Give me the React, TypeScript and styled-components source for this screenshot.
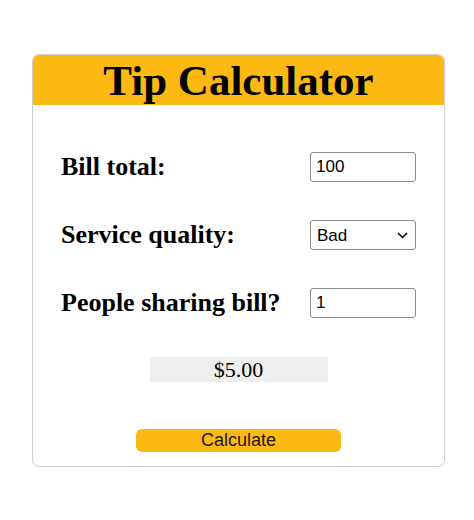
import styled, { createGlobalStyle } from 'styled-components';

const GlobalStyle = createGlobalStyle`
  body {
    margin: 0;
    background: #ffffff;
    font-family: "Liberation Serif", "Times New Roman", serif;
  }
`;

const Page = styled.div`
  padding: 54px 0 0 32px;
`;

const Card = styled.div`
  width: 413px;
  box-sizing: border-box;
  border: 1px solid #cfcfcf;
  border-radius: 7px;
  overflow: hidden;
  padding-bottom: 14px;
`;

const Header = styled.h1`
  margin: 0;
  height: 50px;
  background: #fdb913;
  color: #000;
  font-family: "Liberation Serif", "Times New Roman", serif;
  font-weight: bold;
  font-size: 43px;
  line-height: 52px;
  text-align: center;
`;

const Fields = styled.div`
  display: flex;
  flex-direction: column;
  gap: 38px;
  padding: 47px 28px 0;
`;

const Row = styled.div`
  display: flex;
  align-items: center;
  justify-content: space-between;
  height: 30px;
`;

const Label = styled.label`
  font-family: "Liberation Serif", "Times New Roman", serif;
  font-weight: bold;
  font-size: 26px;
  color: #000;
`;

const fieldStyle = `
  width: 106px;
  height: 30px;
  box-sizing: border-box;
  border: 1px solid #8a8a8a;
  border-radius: 3px;
  background: #fff;
  font-family: "Liberation Sans", Arial, sans-serif;
  font-size: 17px;
  color: #000;
  padding: 0 5px;
`;

const Input = styled.input`
  ${fieldStyle}
`;

const SelectWrap = styled.div`
  position: relative;
  width: 106px;
  height: 30px;
`;

const Select = styled.select`
  ${fieldStyle}
  appearance: none;
  padding-left: 6px;
`;

const Chevron = styled.svg`
  position: absolute;
  right: 8px;
  top: 12px;
  pointer-events: none;
`;

const Result = styled.div`
  width: 178px;
  height: 25px;
  margin: 39px auto 0;
  background: #eeeeee;
  font-family: "Liberation Serif", "Times New Roman", serif;
  font-size: 22px;
  line-height: 26px;
  text-align: center;
  color: #000;
`;

const CalcButton = styled.button`
  display: block;
  width: 205px;
  height: 23px;
  margin: 47px auto 0;
  padding: 0;
  border: none;
  border-radius: 6px;
  background: #fdb913;
  font-family: "Liberation Sans", Arial, sans-serif;
  font-size: 18px;
  line-height: 23px;
  color: #1a1a1a;
`;

export default function App() {
  return (
    <>
      <GlobalStyle />
      <Page>
        <Card>
          <Header>Tip Calculator</Header>
          <Fields>
            <Row>
              <Label>Bill total:</Label>
              <Input defaultValue="100" />
            </Row>
            <Row>
              <Label>Service quality:</Label>
              <SelectWrap>
                <Select defaultValue="bad">
                  <option value="bad">Bad</option>
                  <option value="ok">OK</option>
                  <option value="good">Good</option>
                </Select>
                <Chevron width="11" height="7" viewBox="0 0 11 7">
                  <path d="M1 1 L5.5 5.5 L10 1" fill="none" stroke="#000" strokeWidth="1.5" />
                </Chevron>
              </SelectWrap>
            </Row>
            <Row>
              <Label>People sharing bill?</Label>
              <Input defaultValue="1" />
            </Row>
          </Fields>
          <Result>$5.00</Result>
          <CalcButton>Calculate</CalcButton>
        </Card>
      </Page>
    </>
  );
}
